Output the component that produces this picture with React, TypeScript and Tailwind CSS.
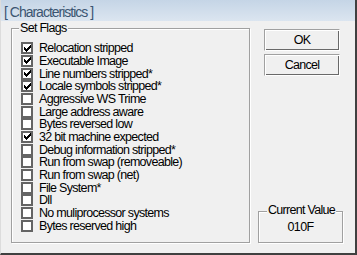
import React from 'react'

const flags: [string, boolean][] = [
  ['Relocation stripped', true],
  ['Executable Image', true],
  ['Line numbers stripped*', true],
  ['Locale symbols stripped*', true],
  ['Aggressive WS Trime', false],
  ['Large address aware', false],
  ['Bytes reversed low', false],
  ['32 bit machine expected', true],
  ['Debug information stripped*', false],
  ['Run from swap (removeable)', false],
  ['Run from swap (net)', false],
  ['File System*', false],
  ['Dll', false],
  ['No muliprocessor systems', false],
  ['Bytes reserved high', false],
]

// classic 7x7 tick
const tick = ['......#', '.....##', '#...###', '##.###.', '#####..', '.###...', '..#....']

function Tick() {
  return (
    <svg width="7" height="7" viewBox="0 0 7 7" shapeRendering="crispEdges">
      {tick.flatMap((row, y) =>
        row.split('').map((c, x) => (c === '#' ? <rect key={`${x}-${y}`} x={x} y={y} width="1" height="1" fill="#000" /> : null)),
      )}
    </svg>
  )
}

function Check({ label, checked }: { label: string; checked: boolean }) {
  return (
    <div className="flex items-center h-[12.67px] gap-[6px]">
      <div className="w-[12px] h-[12px] shrink-0 border-2 border-[#646464] bg-white flex items-center justify-center">
        {checked && <Tick />}
      </div>
      <span className="text-[12.5px] leading-[12px] tracking-[-0.7px] text-black whitespace-nowrap">{label}</span>
    </div>
  )
}

function Button({ children }: { children: React.ReactNode }) {
  return (
    <button className="w-[76px] h-[22px] ml-[6px] bg-[#f0f0f0] border border-t-[#a0a0a0] border-l-[#a0a0a0] border-r-white border-b-white shadow-[inset_1px_1px_0_#fff,inset_-1px_-1px_0_#696969] text-[12.5px] leading-[12px] tracking-[-0.7px] text-black">
      {children}
    </button>
  )
}

export default function App() {
  return (
    <div
      className="w-[357px] h-[255px] flex flex-col bg-[#f0f0f0] border-l border-l-[#dcdcdc] border-r-2 border-b-2 border-r-[#404040] border-b-[#404040] overflow-hidden"
      style={{ fontFamily: '"Liberation Sans", Arial, sans-serif' }}
    >
      <div className="h-[21px] shrink-0 bg-linear-to-b from-[#c5d5e6] to-[#dbe5f0] pl-[3px] pt-[3px] text-[14px] leading-[18px] tracking-[-1px] text-[#3b5571]">
        [ Characteristics ]
      </div>

      <div className="flex flex-1 pt-[7px] pl-[10px] pb-[10px]">
        <div className="relative w-[239px] h-[215px] border border-[#a0a0a0] shadow-[inset_1px_1px_0_#fff,1px_1px_0_#fff] pt-[13px] pl-[9px]">
          <span className="absolute -top-[8px] left-[7px] px-[1px] bg-[#f0f0f0] text-[12.5px] leading-[14px] tracking-[-0.7px] text-black">
            Set Flags
          </span>
          <div className="flex flex-col">
            {flags.map(([label, checked]) => (
              <Check key={label} label={label} checked={checked} />
            ))}
          </div>
        </div>

        <div className="ml-[8px] w-[85px] flex flex-col">
          <div className="mt-[1px] flex flex-col gap-[3px]">
            <Button>OK</Button>
            <Button>Cancel</Button>
          </div>
          <div className="relative mt-auto h-[32px] border border-[#a0a0a0] shadow-[inset_1px_1px_0_#fff,1px_1px_0_#fff] pt-[8px] text-center text-[12.5px] leading-[14px] tracking-[-0.6px] text-black">
            <span className="absolute -top-[9px] left-[8px] px-[1px] bg-[#f0f0f0] text-[12.5px] leading-[14px] tracking-[-0.7px]">
              Current Value
            </span>
            010F
          </div>
        </div>
      </div>
    </div>
  )
}
